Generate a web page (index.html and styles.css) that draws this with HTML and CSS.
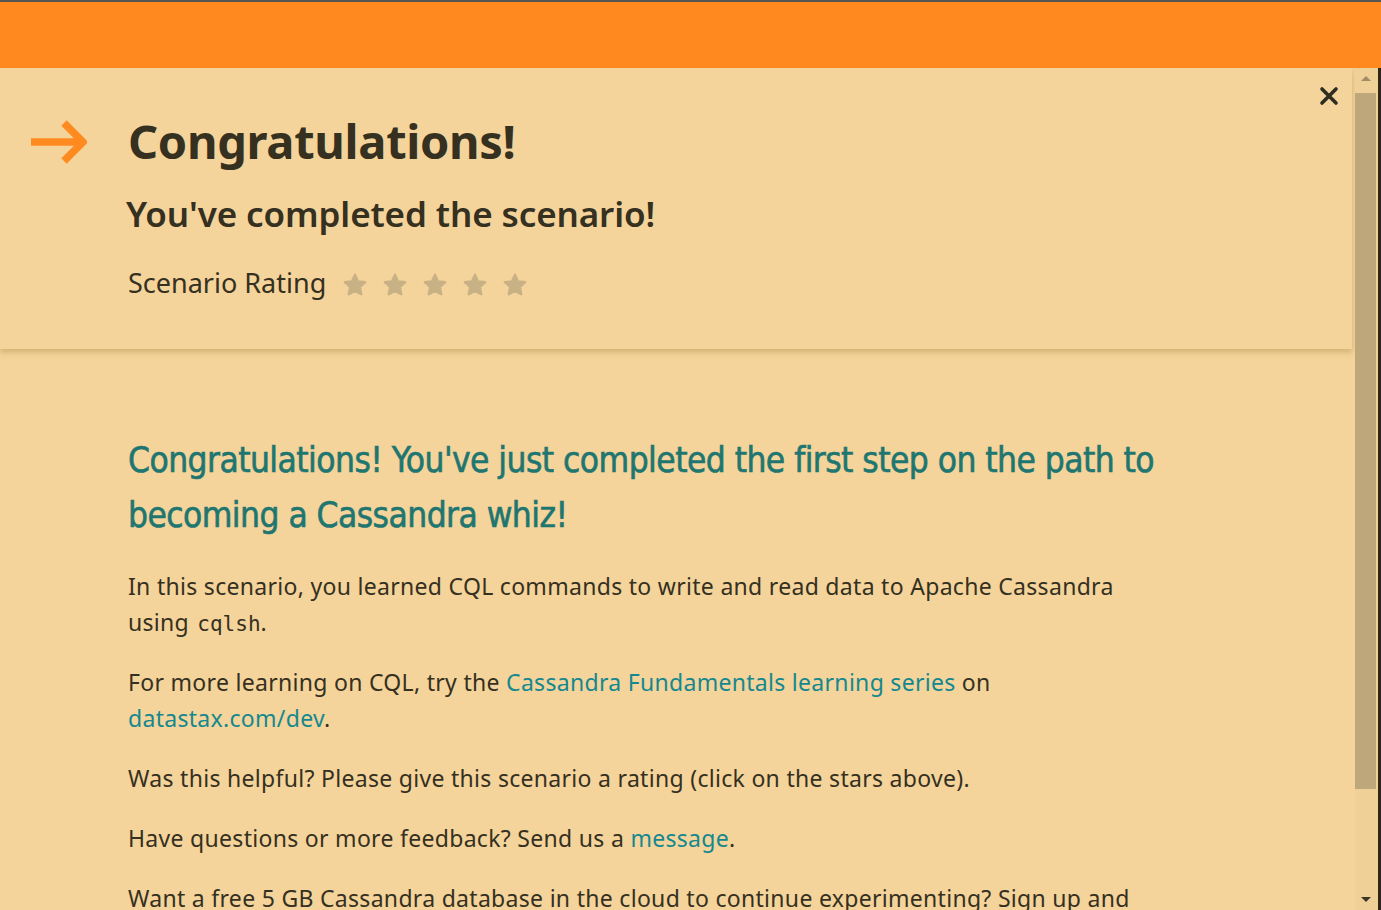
FILE: index.html
```html
<!DOCTYPE html>
<html lang="en">
<head>
<meta charset="utf-8">
<title>Congratulations</title>
<link rel="stylesheet" href="styles.css">
</head>
<body>
<div class="topline"></div>
<div class="topbar"></div>
<div class="frame">
  <div class="viewport">
    <section class="finish-header">
      <svg class="arrow" width="56" height="44" viewBox="0 0 56 44" aria-hidden="true">
        <path d="M0 22 H50" stroke="#ff8a1f" stroke-width="7.5" fill="none"/>
        <path d="M33 3 L52 22 L33 41" stroke="#ff8a1f" stroke-width="7.5" fill="none" stroke-linecap="butt" stroke-linejoin="miter"/>
      </svg>
      <div class="header-text">
        <h1 class="title">Congratulations!</h1>
        <h2 class="subtitle">You've completed the scenario!</h2>
        <div class="rating">
          <span class="rating-label">Scenario Rating</span>
          <div class="stars">
            <svg class="star" viewBox="0 0 24 24"><path d="M12 2.6 L14.8 8.7 L21.4 9.4 L16.4 13.9 L17.8 20.5 L12 17.2 L6.2 20.5 L7.6 13.9 L2.6 9.4 L9.2 8.7 Z"/></svg>
            <svg class="star" viewBox="0 0 24 24"><path d="M12 2.6 L14.8 8.7 L21.4 9.4 L16.4 13.9 L17.8 20.5 L12 17.2 L6.2 20.5 L7.6 13.9 L2.6 9.4 L9.2 8.7 Z"/></svg>
            <svg class="star" viewBox="0 0 24 24"><path d="M12 2.6 L14.8 8.7 L21.4 9.4 L16.4 13.9 L17.8 20.5 L12 17.2 L6.2 20.5 L7.6 13.9 L2.6 9.4 L9.2 8.7 Z"/></svg>
            <svg class="star" viewBox="0 0 24 24"><path d="M12 2.6 L14.8 8.7 L21.4 9.4 L16.4 13.9 L17.8 20.5 L12 17.2 L6.2 20.5 L7.6 13.9 L2.6 9.4 L9.2 8.7 Z"/></svg>
            <svg class="star" viewBox="0 0 24 24"><path d="M12 2.6 L14.8 8.7 L21.4 9.4 L16.4 13.9 L17.8 20.5 L12 17.2 L6.2 20.5 L7.6 13.9 L2.6 9.4 L9.2 8.7 Z"/></svg>
          </div>
        </div>
      </div>
      <svg class="close" width="20" height="20" viewBox="0 0 20 20" aria-label="Close">
        <path d="M3 3 L17 17 M17 3 L3 17" stroke="#2f2c22" stroke-width="3.6" stroke-linecap="round"/>
      </svg>
    </section>
    <article class="finish-body">
      <h3 class="lead">Congratulations! You've just completed the first step on the path to becoming a Cassandra whiz!</h3>
      <p>In this scenario, you learned CQL commands to write and read data to Apache Cassandra using <code>cqlsh</code>.</p>
      <p>For more learning on CQL, try the <a href="#">Cassandra Fundamentals learning series</a> on <a href="#">datastax.com/dev</a>.</p>
      <p>Was this helpful? Please give this scenario a rating (click on the stars above).</p>
      <p>Have questions or more feedback? Send us a <a href="#">message</a>.</p>
      <p>Want a free 5 GB Cassandra database in the cloud to continue experimenting? Sign up and get started with DataStax Astra for free.</p>
    </article>
  </div>
  <div class="scrollbar">
    <div class="sb-up"></div>
    <div class="sb-track"><div class="sb-thumb"></div></div>
    <div class="sb-down"></div>
  </div>
  <div class="edge"></div>
</div>
</body>
</html>
```

FILE: styles.css
```css
* { box-sizing: border-box; }
html, body {
  margin: 0;
  padding: 0;
  height: 100%;
  overflow: hidden;
  background: #f4d49a;
  font-family: "Noto Sans", "Open Sans", sans-serif;
  color: #35301f;
}
.topline { height: 2px; background: #545454; }
.topbar { height: 66px; background: #ff891e; }
.frame {
  display: flex;
  height: 842px;
}
.viewport {
  flex: 0 0 1355px;
  overflow: hidden;
  background: #f4d49a;
}
.finish-header {
  width: 1352px;
  height: 281px;
  display: flex;
  align-items: flex-start;
  padding: 52px 0 0 31px;
  background: #f4d49a;
  box-shadow: 0 3px 6px rgba(150, 110, 40, 0.35);
  position: relative;
}
.arrow { flex: 0 0 auto; margin-top: 0; }
.header-text { margin-left: 41px; }
.title {
  margin: -9px 0 0 0;
  font-size: 47px;
  font-weight: 700;
  line-height: 60px;
  color: #35301f;
  letter-spacing: -0.3px;
}
.subtitle {
  margin: 20px 0 0 -2px;
  font-size: 35px;
  font-weight: 600;
  line-height: 46px;
  color: #35301f;
  letter-spacing: -0.1px;
}
.rating {
  display: flex;
  align-items: center;
  margin-top: 28px;
}
.rating-label {
  font-size: 27px;
  line-height: 36px;
}
.stars { display: flex; gap: 14px; margin-left: 16px; margin-top: 4px; }
.star { width: 26px; height: 26px; fill: #c9b186; stroke: #c9b186; stroke-width: 2.2; stroke-linejoin: round; }
.close {
  position: absolute;
  right: 13px;
  top: 18px;
}
.finish-body {
  padding: 84px 0 0 128px;
  width: 1162px;
}
.lead {
  margin: 0 0 25px 0;
  font-family: "Liberation Sans Narrow", "DejaVu Sans Condensed", sans-serif;
  font-stretch: condensed;
  font-size: 35px;
  letter-spacing: -0.55px;
  line-height: 55px;
  font-weight: 400;
  color: #1f7670;
  -webkit-text-stroke: 0.6px #1f7670;
}
p {
  margin: 0 0 24px 0;
  font-size: 23px;
  letter-spacing: 0.3px;
  line-height: 36px;
  color: #35301f;
}
code {
  font-family: "DejaVu Sans Mono", monospace;
  font-size: 21px;
  line-height: 1;
  letter-spacing: 0;
  padding-left: 2px;
}
a { color: #15888f; text-decoration: none; }
.scrollbar {
  flex: 0 0 23px;
  display: flex;
  flex-direction: column;
  background: #efd198;
}
.sb-up, .sb-down { height: 25px; position: relative; }
.sb-up::after {
  content: "";
  position: absolute;
  left: 6px; top: 8px;
  border-left: 5px solid transparent;
  border-right: 5px solid transparent;
  border-bottom: 5px solid #a18c67;
}
.sb-down::after {
  content: "";
  position: absolute;
  left: 6px; top: 12px;
  border-left: 5px solid transparent;
  border-right: 5px solid transparent;
  border-top: 5px solid #3d3526;
}
.sb-track { flex: 1; padding: 0 2px 0 0; }
.sb-thumb { height: 696px; background: #bea87b; margin-left: 0; width: 21px; }
.edge { flex: 0 0 3px; background: #2b2618; }
```
